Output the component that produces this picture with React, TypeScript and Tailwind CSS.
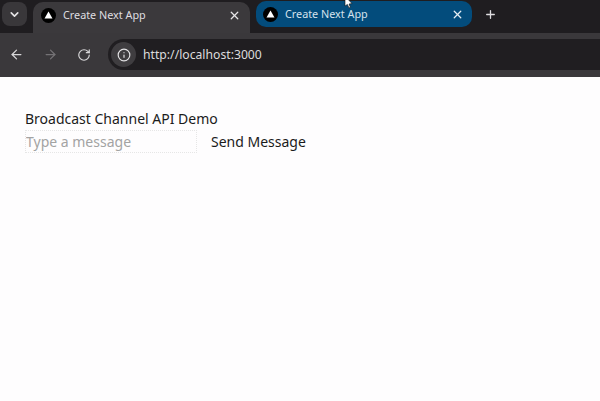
import { ChevronDown, X, Plus, ArrowLeft, ArrowRight, RotateCw, Info } from 'lucide-react'

const uiFont = 'font-["Noto_Sans",sans-serif]'

function NextLogo() {
  return (
    <span className="flex h-[15px] w-[15px] shrink-0 items-center justify-center rounded-full bg-black">
      <svg width="9" height="8" viewBox="0 0 9 8">
        <path d="M4.5 0.5 L8.5 7.5 L0.5 7.5 Z" fill="#fff" />
      </svg>
    </span>
  )
}

export default function App() {
  return (
    <div className={`relative flex h-[401px] w-[600px] flex-col overflow-hidden bg-[#fefdfe] ${uiFont}`}>
      <div className="flex h-[33px] shrink-0 bg-[#1f1d20] pl-[2px]">
        <div className="mt-[2px] flex h-[24px] w-[25px] items-center justify-center rounded-lg bg-[#39373a] text-[#e4e3e5]">
          <ChevronDown size={13} strokeWidth={3} />
        </div>
        <div className="ml-[6px] flex h-[31px] w-[217px] items-center self-end rounded-t-[10px] bg-[#3b393c] pb-[5px] pl-[8px] pr-[9px] text-[#dfdee0]">
          <NextLogo />
          <span className="ml-[7px] flex-1 text-[10.8px]">Create Next App</span>
          <X size={13} strokeWidth={2.4} className="text-[#e6e5e7]" />
        </div>
        <div className="ml-[6px] mt-[1px] flex h-[26px] w-[216px] items-center rounded-[10px] bg-[#034c7c] pl-[7px] pr-[8px] text-[#d5e2ec]">
          <NextLogo />
          <span className="ml-[7px] flex-1 text-[10.8px]">Create Next App</span>
          <X size={13} strokeWidth={2.4} className="text-[#e6eef4]" />
        </div>
        <div className="ml-[12px] mt-[8px] text-[#dedde0]">
          <Plus size={13} strokeWidth={2.4} />
        </div>
      </div>

      <div className="flex h-[44px] shrink-0 items-center bg-[#3a383b] pb-[1px]">
        <div className="flex w-[108px] items-center text-[#d8d7d9]">
          <ArrowLeft size={15} strokeWidth={2} className="ml-[9px]" />
          <ArrowRight size={15} strokeWidth={2} className="ml-[19px] text-[#747275]" />
          <RotateCw size={14} strokeWidth={2} className="ml-[19px]" />
        </div>
        <div className="flex h-[31px] flex-1 items-center rounded-l-full bg-[#201e21] pl-[3px]">
          <div className="flex h-[25px] w-[25px] items-center justify-center rounded-full bg-[#3f3d40] text-[#e4e3e5]">
            <Info size={14} strokeWidth={2} />
          </div>
          <span className="ml-[7px] pt-[1px] text-[12.2px] text-[#dcdbdd]">http://localhost:3000</span>
        </div>
      </div>

      <div className="flex flex-col pl-[25px] pt-[32px] text-[14px] leading-[20px] text-[#1b1b1b]">
        <div>Broadcast Channel API Demo</div>
        <div className="mt-[1px] flex items-center">
          <input
            placeholder="Type a message"
            className="h-[23px] w-[172px] border border-dotted border-[#e6e6e6] text-[14px] outline-none placeholder:text-[#a3a3a3]"
          />
          <button className="ml-[14px] text-[14px]">Send Message</button>
        </div>
      </div>

      <svg className="absolute left-[344px] top-0" width="10" height="10" viewBox="0 0 10 10">
        <path d="M1 -4 L1 6 L3.4 4.4 L5 8 L6.4 7.3 L5 4 L8 3.6 Z" fill="#fff" stroke="#111" strokeWidth="0.6" />
      </svg>
    </div>
  )
}
